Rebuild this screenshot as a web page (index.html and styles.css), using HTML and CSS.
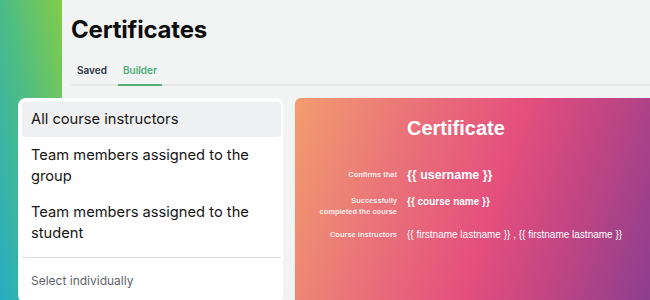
FILE: index.html
```html
<!DOCTYPE html>
<html>
<head>
<meta charset="utf-8">
<link rel="stylesheet" href="styles.css">
</head>
<body>
<div class="app">
  <aside class="sidebar"></aside>
  <main class="main">
    <header class="header">
      <h1 class="title">Certificates</h1>
      <nav class="tabs">
        <span class="tab">Saved</span>
        <span class="tab tab-active">Builder</span>
      </nav>
    </header>
    <section class="content">
      <div class="card">
        <div class="option option-active">All course instructors</div>
        <div class="option">Team members assigned to the group</div>
        <div class="option">Team members assigned to the student</div>
        <div class="divider"></div>
        <div class="option option-muted">Select individually</div>
      </div>
      <div class="cert">
        <div class="cert-grid">
          <div></div>
          <div class="cert-title">Certificate</div>
          <div class="cert-label row2">Confirms that</div>
          <div class="cert-value cert-big row2">{{ username }}</div>
          <div class="cert-label row3">Successfully completed the course</div>
          <div class="cert-value cert-mid row3">{{ course name }}</div>
          <div class="cert-label row4">Course instructors</div>
          <div class="cert-value cert-small row4">{{ firstname lastname }} , {{ firstname lastname }}</div>
        </div>
      </div>
    </section>
  </main>
</div>
</body>
</html>
```

FILE: styles.css
```css
* { box-sizing: border-box; }
html, body { margin: 0; padding: 0; }
body {
  width: 650px;
  height: 300px;
  overflow: hidden;
  background: #f2f3f3;
  font-family: "Inter", "Noto Sans", sans-serif;
  color: #151515;
}
.app {
  display: flex;
  height: 300px;
}
.sidebar {
  width: 62px;
  flex: none;
  background: linear-gradient(to top right, #27adc2 0%, #4fbd82 55%, #82cc48 100%);
}
.main {
  flex: 1;
  display: flex;
  flex-direction: column;
  min-width: 0;
}
.header {
  padding: 14px 0 0 9px;
}
.title {
  margin: 0;
  font-size: 24px;
  font-weight: 700;
  letter-spacing: -0.2px;
  line-height: 32px;
  color: #0d0d0d;
}
.tabs {
  display: flex;
  margin-top: 14px;
  border-bottom: 2px solid #e6e8e8;
  height: 26px;
}
.tab {
  font-size: 10px;
  font-weight: 600;
  color: #2b3340;
  padding: 3px 6px 0 6px;
  line-height: 14px;
  height: 26px;
  margin-bottom: -2px;
  border-bottom: 2px solid transparent;
}
.tab-active {
  color: #4fae79;
  border-bottom-color: #55b07e;
  margin-left: 5px;
  padding: 3px 5px 0 5px;
}
.content {
  display: flex;
  gap: 12px;
  margin-top: 12px;
  margin-left: -44px;
  flex: 1;
}
.card {
  width: 265px;
  flex: none;
  background: #fff;
  border-radius: 8px;
  padding: 4px 2px 3px 4px;
}
.option {
  font-size: 14.7px;
  line-height: 20.5px;
  padding: 8px 9px 8px;
  border-radius: 4px;
  color: #161616;
}
.option-active {
  background: #eef0f1;
  padding: 7px 9px 7.5px;
}
.divider {
  height: 1px;
  background: #dddfe0;
  margin: 6px 0 0 0;
}
.option-muted {
  font-size: 12px;
  color: #606468;
  padding-top: 13px;
}
.cert {
  flex: 1;
  border-radius: 6px 0 0 0;
  background: linear-gradient(108deg, #f29d6f 0%, #ea7479 28%, #e54f7d 55%, #c24583 75%, #8c3e90 100%);
  font-family: "Liberation Sans", Arial, sans-serif;
  color: #fff;
  padding-top: 18px;
}
.cert-grid {
  display: grid;
  grid-template-columns: 102px auto;
  column-gap: 10px;
  align-items: start;
}
.cert-title {
  font-size: 20px;
  font-weight: 700;
  line-height: 24px;
}
.cert-label {
  text-align: right;
  font-size: 7.5px;
  font-weight: 700;
  line-height: 11px;
  color: rgba(255,255,255,0.88);
  padding-left: 24px;
}
.cert-value { white-space: nowrap; }
.row2 { margin-top: 28px; line-height: 14px; }
.row3 { margin-top: 13px; }
.row4 { margin-top: 12px; line-height: 12px; }
.cert-big {
  font-size: 12.5px;
  font-weight: 700;
}
.cert-mid {
  font-size: 10px;
  font-weight: 700;
  line-height: 13px;
}
.cert-small {
  font-size: 10px;
}
```
